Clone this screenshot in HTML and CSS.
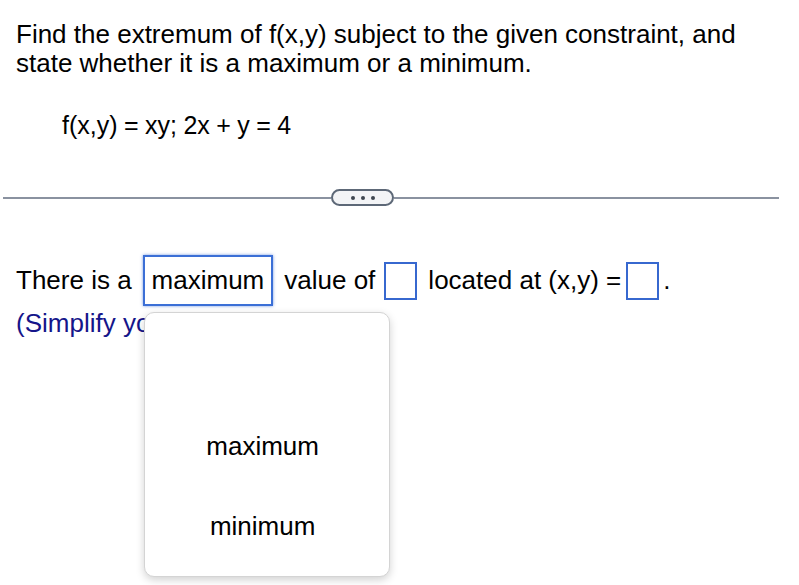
FILE: index.html
```html
<!DOCTYPE html>
<html>
<head>
<meta charset="utf-8">
<link rel="stylesheet" href="styles.css">
</head>
<body>
<div class="page">
  <p class="question">Find the extremum of f(x,y) subject to the given constraint, and state whether it is a maximum or a minimum.</p>
  <p class="formula">f(x,y) = xy; 2x + y = 4</p>
  <div class="sep">
    <span class="sep-left"></span>
    <span class="pill"><i></i><i></i><i></i></span>
    <span class="sep-right"></span>
  </div>
  <div class="answer">
    <span class="t t1">There is a</span>
    <span class="select-wrap">
      <span class="selected">maximum</span>
      <div class="dropdown">
        <div class="opt">maximum</div>
        <div class="opt">minimum</div>
      </div>
    </span>
    <span class="t t2">value of</span>
    <span class="box b1"></span>
    <span class="t t3">located at (x,y) =</span>
    <span class="box b2"></span>
    <span class="t t4">.</span>
  </div>
  <p class="hint">(Simplify your answer.)</p>
</div>
</body>
</html>
```
FILE: styles.css
```css
html, body {
  margin: 0;
  padding: 0;
  background: #ffffff;
}
body {
  font-family: "Liberation Sans", Arial, Helvetica, sans-serif;
  color: #000;
  width: 799px;
  height: 585px;
  overflow: hidden;
}
.page {
  padding-top: 20px;
}
.question {
  margin: 0;
  padding: 0 40px 0 16px;
  font-size: 26px;
  line-height: 28.5px;
}
.formula {
  margin: 34px 0 0 0;
  padding-left: 62px;
  font-size: 25px;
  line-height: 28px;
  word-spacing: -0.5px;
}
.sep {
  margin: 50px 0 0 3px;
  width: 776px;
  height: 17px;
  display: flex;
  align-items: center;
}
.sep-left {
  width: 328px;
  height: 2px;
  background: #8a92a0;
}
.sep-right {
  flex: 1;
  height: 2px;
  background: #8a92a0;
}
.pill {
  box-sizing: border-box;
  width: 63px;
  height: 17px;
  border: 2px solid #5d6877;
  border-radius: 9px;
  background: #f3f4f6;
  display: flex;
  align-items: center;
  justify-content: center;
  gap: 6px;
}
.pill i {
  display: block;
  width: 4px;
  height: 4px;
  border-radius: 50%;
  background: #3f4650;
}
.answer {
  margin-top: 49px;
  padding-left: 16px;
  display: flex;
  align-items: center;
  height: 51px;
  font-size: 26px;
}
.t {
  line-height: 29px;
  white-space: nowrap;
}
.select-wrap {
  position: relative;
  margin-left: 11px;
}
.selected {
  display: block;
  box-sizing: border-box;
  height: 51px;
  line-height: 47px;
  padding: 0 7px;
  border: 2px solid #3b6fd6;
  box-shadow: 0 0 3px rgba(59, 111, 214, 0.7);
  background: #fff;
}
.t2 { margin-left: 11px; }
.box {
  box-sizing: border-box;
  width: 33px;
  height: 38px;
  border: 2px solid #3768cf;
  background: #fff;
}
.b1 { margin-left: 9px; }
.t3 { margin-left: 11px; }
.b2 { margin-left: 5px; }
.t4 { margin-left: 4px; }
.dropdown {
  position: absolute;
  left: 1px;
  top: 57px;
  box-sizing: border-box;
  width: 246px;
  height: 265px;
  background: #fff;
  border: 1px solid #d4d4d4;
  border-radius: 10px;
  box-shadow: 0 3px 9px rgba(0, 0, 0, 0.18);
  padding: 93px 8px 0 0;
  z-index: 5;
}
.opt {
  height: 80px;
  line-height: 80px;
  text-align: center;
  font-size: 26px;
}
.hint {
  margin: 3px 0 0 0;
  padding-left: 16px;
  font-size: 26px;
  line-height: 29px;
  color: #15158a;
}
```
